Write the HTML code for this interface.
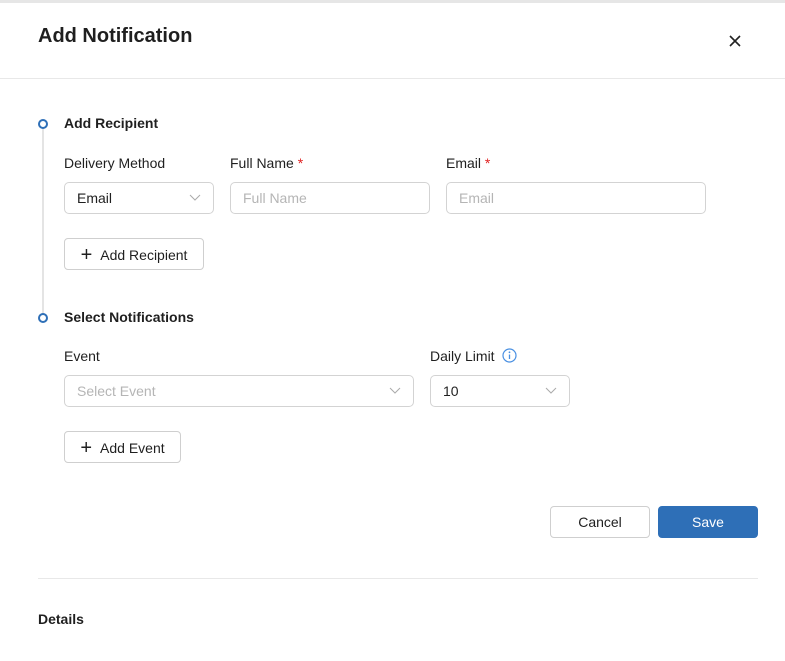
<!DOCTYPE html>
<html><head><style>
*{box-sizing:border-box;margin:0;padding:0}
body{width:785px;height:661px;background:#fff;font-family:"Liberation Sans",Arial,sans-serif;color:#1f1f1f;position:relative;overflow:hidden}
.a{position:absolute}
.lbl{font-size:14px;color:#1f1f1f}
.req{color:#e02020}
.inp{position:absolute;height:32px;border:1px solid #d3d3d3;border-radius:5px;font-size:14px;padding-left:12px;line-height:30px}
.ph{color:#b5b5b5}
.chev{position:absolute;right:12px;top:10px}
.btn{position:absolute;height:32px;border:1px solid #cfcfcf;border-radius:4px;font-size:14px;line-height:30px;text-align:center;background:#fff}
.dot{position:absolute;width:10px;height:10px;border:2.5px solid #2e6fb7;border-radius:50%;background:#fff}
.h{font-weight:bold;font-size:14px}
</style></head><body>
<div class="a" style="left:0;top:0;width:785px;height:3px;background:#e6e6e6"></div>
<div class="a" style="left:38px;top:25px;font-size:20px;font-weight:bold">Add Notification</div>
<svg class="a" style="left:729px;top:35px" width="12" height="12"><path d="M1 1L11 11M11 1L1 11" stroke="#222" stroke-width="1.6"/></svg>
<div class="a" style="left:0;top:78px;width:785px;height:1px;background:#e8e8e8"></div>

<div class="a" style="left:42px;top:128px;width:2px;height:186px;background:#e4e4e4"></div>
<div class="dot" style="left:38px;top:119px"></div>
<div class="dot" style="left:38px;top:313px"></div>

<div class="a h" style="left:64px;top:115px">Add Recipient</div>
<div class="a lbl" style="left:64px;top:155px">Delivery Method</div>
<div class="a lbl" style="left:230px;top:155px">Full Name <span class="req">*</span></div>
<div class="a lbl" style="left:446px;top:155px">Email <span class="req">*</span></div>
<div class="inp" style="left:64px;top:182px;width:150px">Email<svg class="chev" width="12" height="10"><path d="M1 2L6 7L11 2" stroke="#aaa" fill="none"/></svg></div>
<div class="inp ph" style="left:230px;top:182px;width:200px">Full Name</div>
<div class="inp ph" style="left:446px;top:182px;width:260px">Email</div>
<div class="btn" style="left:64px;top:238px;width:140px"><span style="font-size:20px;position:relative;top:1px;margin-right:8px;font-weight:300">+</span>Add Recipient</div>

<div class="a h" style="left:64px;top:309px">Select Notifications</div>
<div class="a lbl" style="left:64px;top:348px">Event</div>
<div class="a lbl" style="left:430px;top:348px">Daily Limit</div>
<svg class="a" style="left:502px;top:348px" width="15" height="15"><circle cx="7.5" cy="7.5" r="6.5" stroke="#4a90e2" stroke-width="1.2" fill="none"/><circle cx="7.5" cy="4.3" r="0.9" fill="#4a90e2"/><path d="M7.5 6.5V11" stroke="#4a90e2" stroke-width="1.3"/></svg>
<div class="inp ph" style="left:64px;top:375px;width:350px">Select Event<svg class="chev" width="12" height="10"><path d="M1 2L6 7L11 2" stroke="#aaa" fill="none"/></svg></div>
<div class="inp" style="left:430px;top:375px;width:140px">10<svg class="chev" width="12" height="10"><path d="M1 2L6 7L11 2" stroke="#aaa" fill="none"/></svg></div>
<div class="btn" style="left:64px;top:431px;width:117px"><span style="font-size:20px;position:relative;top:1px;margin-right:8px;font-weight:300">+</span>Add Event</div>

<div class="btn" style="left:550px;top:506px;width:100px">Cancel</div>
<div class="btn" style="left:658px;top:506px;width:100px;background:#2e6fb7;border-color:#2e6fb7;color:#fff">Save</div>

<div class="a" style="left:38px;top:578px;width:720px;height:1px;background:#e8e8e8"></div>
<div class="a h" style="left:38px;top:611px">Details</div>
</body></html>
